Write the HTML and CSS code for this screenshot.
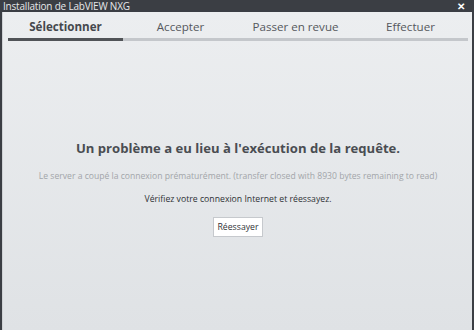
FILE: index.html
```html
<!DOCTYPE html>
<html lang="fr">
<head>
    <meta charset="UTF-8">
    <title>Installation de LabVIEW NXG</title>
    <link rel="stylesheet" href="styles.css">
</head>
<body>
    <div class="window">
        <div class="titlebar">
            <span class="title">Installation de LabVIEW NXG</span>
            <span class="close">&#x2715;</span>
        </div>
        <div class="content">
            <ul class="steps">
                <li class="step active">Sélectionner</li>
                <li class="step">Accepter</li>
                <li class="step">Passer en revue</li>
                <li class="step">Effectuer</li>
            </ul>
            <div class="error">
                <h1>Un problème a eu lieu à l'exécution de la requête.</h1>
                <p class="detail">Le server a coupé la connexion prématurément. (transfer closed with 8930 bytes remaining to read)</p>
                <p class="hint">Vérifiez votre connexion Internet et réessayez.</p>
                <button class="retry">Réessayer</button>
            </div>
        </div>
    </div>
</body>
</html>
```

FILE: styles.css
```css
body {
    margin: 0;
    font-family: 'Open Sans', 'Noto Sans', sans-serif;
    background: #6d7075;
}

.window {
    width: 474px;
    height: 330px;
    display: flex;
    flex-direction: column;
    background: #3b3e44;
}

.titlebar {
    height: 12px;
    display: flex;
    align-items: center;
    justify-content: space-between;
    padding: 0 9px 0 3px;
    color: #e6e7e9;
}

.title {
    font-size: 10px;
    letter-spacing: -0.2px;
}

.close {
    font-size: 10px;
    font-weight: bold;
    color: #fff;
}

.content {
    flex: 1;
    margin-left: 2px;
    margin-right: 2px;
    background: linear-gradient(#eceef0, #dfe2e5);
    border-left: 1px solid #cfd2d5;
    padding: 0 4px 0 5px;
    display: flex;
    flex-direction: column;
}

.steps {
    list-style: none;
    margin: 0;
    padding: 0;
    display: grid;
    grid-template-columns: repeat(4, 1fr);
}

.step {
    text-align: center;
    font-size: 11.6px;
    color: #55585d;
    padding: 7px 0 4px;
    border-bottom: 3px solid #c4c7cb;
}

.step.active {
    font-weight: bold;
    color: #45484d;
    border-bottom-color: #505357;
}

.error {
    text-align: center;
    padding-top: 98px;
}

.error h1 {
    margin: 0;
    font-size: 13.1px;
    color: #4a4d52;
}

.detail {
    margin: 13px 0 0;
    font-size: 8.6px;
    color: #a2a5a9;
}

.hint {
    margin: 11px 0 0;
    font-size: 8.7px;
    color: #2f3236;
}

.retry {
    margin-top: 12px;
    font-family: inherit;
    font-size: 8.7px;
    color: #2f3236;
    background: #fff;
    border: 1px solid #c6c9cd;
    padding: 3px 3px;
    height: 20px;
}
```
